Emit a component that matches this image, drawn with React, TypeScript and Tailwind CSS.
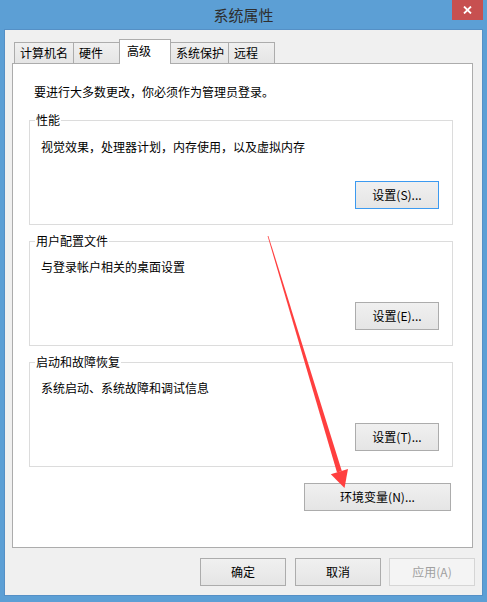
import React from "react";

type BtnProps = {
  label: string;
  className?: string;
  focused?: boolean;
  disabled?: boolean;
};

const Button = ({ label, className = "", focused, disabled }: BtnProps) => {
  const tone = disabled
    ? "border-[#d5d5d5] bg-[#f4f4f4] text-[#a0a0a0]"
    : focused
    ? "border-[#3c9af0] bg-gradient-to-b from-[#f0f0f0] to-[#e5e5e5] text-black"
    : "border-[#acacac] bg-gradient-to-b from-[#f0f0f0] to-[#e5e5e5] text-black";
  return (
    <button
      className={`h-[28px] border text-[12px] leading-[16px] flex items-center justify-center ${tone} ${className}`}
    >
      {label}
    </button>
  );
};

type GroupProps = {
  title: string;
  text: string;
  button: string;
  focused?: boolean;
  top?: string;
  className?: string;
};

const Group = ({ title, text, button, focused, top = "pt-[10px]", className = "" }: GroupProps) => {
  return (
    <fieldset className={`h-[113px] border border-[#dcdcdc] ${className}`}>
      <legend className="ml-[5px] px-[1px] text-[12px] leading-[16px]">{title}</legend>
      <div className={`h-[96px] flex flex-col pl-[11px] ${top}`}>
        <p className="text-[12px] leading-[16px]">{text}</p>
        <Button label={button} focused={focused} className="w-[84px] mt-auto self-end mr-[13px] mb-[15px]" />
      </div>
    </fieldset>
  );
};

const Tab = ({ label, w, active, className = "" }: { label: string; w: string; active?: boolean; className?: string }) => {
  if (active) {
    return (
      <div
        className={`relative z-10 -mb-px h-[25px] ${w} bg-white border-x border-t border-[#acacac] pl-[7px] pt-[3px] text-[12px] leading-[16px] ${className}`}
      >
        {label}
      </div>
    );
  }
  return (
    <div
      className={`h-[21px] ${w} bg-gradient-to-b from-[#f0f0f0] to-[#e5e5e5] border-x border-t border-[#acacac] pl-[5px] pt-[2px] text-[12px] leading-[16px] ${className}`}
    >
      {label}
    </div>
  );
};

export default function App() {
  return (
    <div className="relative w-[487px] h-[602px] bg-[#5c9fd5] flex flex-col font-['Noto_Sans_CJK_SC','Microsoft_YaHei',sans-serif] text-black">
      {/* title bar */}
      <div className="relative h-[29px] flex justify-center">
        <span className="mt-[5px] text-[15px] leading-[20px] text-[#2e2e2e]">系统属性</span>
        <div className="absolute right-[4px] top-0 w-[31px] h-[20px] bg-[#c75050] flex items-center justify-center">
          <svg width="9" height="8" viewBox="0 0 9 8">
            <path d="M1 0.5 L8 7.5 M8 0.5 L1 7.5" stroke="white" strokeWidth="1.8" />
          </svg>
        </div>
      </div>

      {/* client */}
      <div className="mx-[4px] mb-[6px] flex-1 bg-[#f0f0f0] border border-[#5590c6] flex flex-col pl-[7px] pt-[9px]">
        <div className="flex items-end pl-[2px]">
          <Tab label="计算机名" w="w-[60px]" />
          <Tab label="硬件" w="w-[47px]" className="-ml-px" />
          <Tab label="高级" w="w-[52px]" active className="-ml-px" />
          <Tab label="系统保护" w="w-[59px]" className="-ml-px" />
          <Tab label="远程" w="w-[47px]" className="-ml-px" />
        </div>

        <div className="h-[485px] mr-[9px] border border-[#acacac] bg-white flex flex-col">
          <p className="pl-[21px] pt-[20px] text-[12px] leading-[16px]">
            要进行大多数更改，你必须作为管理员登录。
          </p>
          <div className="ml-[16px] mr-[19px] flex flex-col">
            <Group
              title="性能"
              text="视觉效果，处理器计划，内存使用，以及虚拟内存"
              button="设置(S)..."
              focused
              top="pt-[11px]"
              className="mt-[12px]"
            />
            <Group
              title="用户配置文件"
              text="与登录帐户相关的桌面设置"
              button="设置(E)..."
              className="mt-[8px]"
            />
            <Group
              title="启动和故障恢复"
              text="系统启动、系统故障和调试信息"
              button="设置(T)..."
              className="mt-[8px]"
            />
          </div>
          <Button label="环境变量(N)..." className="w-[147px] mt-[16px] self-end mr-[21px]" />
        </div>

        <div className="flex justify-end mt-[10px] pr-[7px]">
          <Button label="确定" className="w-[86px]" />
          <Button label="取消" className="w-[86px] ml-[9px]" />
          <Button label="应用(A)" disabled className="w-[86px] ml-[8px]" />
        </div>
      </div>

      {/* red annotation arrow */}
      <svg className="absolute left-0 top-0 pointer-events-none" width="487" height="602">
        <polygon points="267.6,236.1 268.4,235.9 341.8,471 337,472.4" fill="#ff3f3f" />
        <polygon points="348,469.1 330.8,474.3 344.5,488" fill="#ff3f3f" />
      </svg>
    </div>
  );
}
